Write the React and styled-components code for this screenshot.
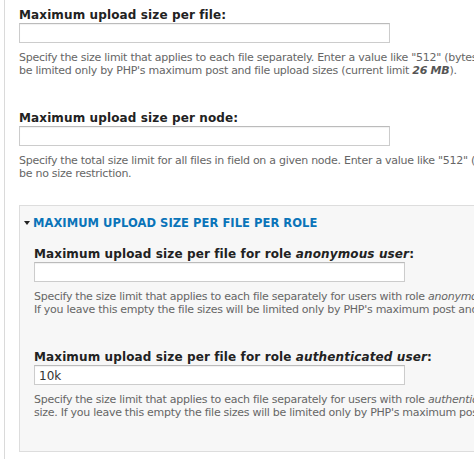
import React from 'react';
import styled, { createGlobalStyle } from 'styled-components';

const GlobalStyle = createGlobalStyle`
  html, body {
    margin: 0;
    padding: 0;
    background: #fff;
    overflow: hidden;
  }
  body {
    font-family: 'DejaVu Sans', Verdana, sans-serif;
    color: #333;
  }
`;

const Page = styled.div`
  width: 720px;
  height: 459px;
  margin-left: 4px;
  padding: 7px 0 0 14px;
  border-left: 1px solid #dadada;
  box-sizing: border-box;
  overflow: hidden;
`;

const Item = styled.div`
  margin-bottom: ${p => p.gap || 0}px;
`;

const Label = styled.label`
  display: block;
  font-size: 12px;
  line-height: 16px;
  font-weight: bold;
  color: #222;
  letter-spacing: 0.12px;
  em {
    font-style: italic;
  }
`;

const TextInput = styled.input`
  display: block;
  box-sizing: border-box;
  width: 371px;
  height: 20px;
  margin: 0;
  padding: 1px 4px 0;
  border: 1px solid #ccc;
  border-top-color: #bbb;
  border-radius: 0;
  background: #fff;
  box-shadow: inset 0 1px 1px rgba(0, 0, 0, 0.06);
  font-family: 'DejaVu Sans', sans-serif;
  font-size: 12px;
  color: #333;
  outline: none;
`;

const Description = styled.div`
  margin-top: 8px;
  font-size: 11px;
  line-height: 13px;
  color: #666;
  white-space: nowrap;
  letter-spacing: -0.27px;
  strong {
    color: #555;
    font-weight: bold;
    font-style: italic;
  }
`;

const RoleBox = styled.div`
  width: 700px;
  height: 247px;
  box-sizing: border-box;
  border: 1px solid #ddd;
  background: #f7f7f7;
  padding: 9px 14px 0 14px;
`;

const RoleHeader = styled.div`
  display: flex;
  align-items: center;
  gap: 3px;
  margin-left: -10px;
  margin-bottom: 15px;
  font-size: 11.5px;
  line-height: 16px;
  font-weight: bold;
  text-transform: uppercase;
  color: #0a74b9;
  letter-spacing: 0.05px;
`;

const Caret = styled.span`
  width: 0;
  height: 0;
  border-left: 3px solid transparent;
  border-right: 3px solid transparent;
  border-top: 4px solid #222;
`;

export default function App() {
  return (
    <>
      <GlobalStyle />
      <Page>
        <Item gap={33}>
          <Label>Maximum upload size per file:</Label>
          <TextInput type="text" defaultValue="" />
          <Description>
            Specify the size limit that applies to each file separately. Enter a value like "512" (bytes), "80 KB" (kilobytes) or "50 MB" (megabytes) in order to restrict the allowed file size. If you leave this empty the file sizes will
            <br />
            be limited only by PHP's maximum post and file upload sizes (current limit <strong>26 MB</strong>).
          </Description>
        </Item>
        <Item gap={25}>
          <Label>Maximum upload size per node:</Label>
          <TextInput type="text" defaultValue="" />
          <Description>
            Specify the total size limit for all files in field on a given node. Enter a value like "512" (bytes), "80 KB" (kilobytes) or "50 MB" (megabytes) in order to restrict the total size of a node. Leave this empty, or set it to 0, if there should
            <br />
            be no size restriction.
          </Description>
        </Item>
        <RoleBox>
          <RoleHeader>
            <Caret />
            Maximum upload size per file per role
          </RoleHeader>
          <Item gap={33}>
            <Label>Maximum upload size per file for role <em>anonymous user</em>:</Label>
            <TextInput type="text" defaultValue="" />
            <Description>
              Specify the size limit that applies to each file separately for users with role <em>anonymous user</em>. Enter a value like "512" (bytes), "80 KB" (kilobytes) or "50 MB" (megabytes) in order to restrict the allowed file size.
              <br />
              If you leave this empty the file sizes will be limited only by PHP's maximum post and file upload sizes.
            </Description>
          </Item>
          <Item>
            <Label>Maximum upload size per file for role <em>authenticated user</em>:</Label>
            <TextInput type="text" defaultValue="10k" />
            <Description>
              Specify the size limit that applies to each file separately for users with role <em>authenticated user</em>. Enter a value like "512" (bytes), "80 KB" (kilobytes) or "50 MB" (megabytes) in order to restrict the allowed file
              <br />
              size. If you leave this empty the file sizes will be limited only by PHP's maximum post and file upload sizes.
            </Description>
          </Item>
        </RoleBox>
      </Page>
    </>
  );
}
